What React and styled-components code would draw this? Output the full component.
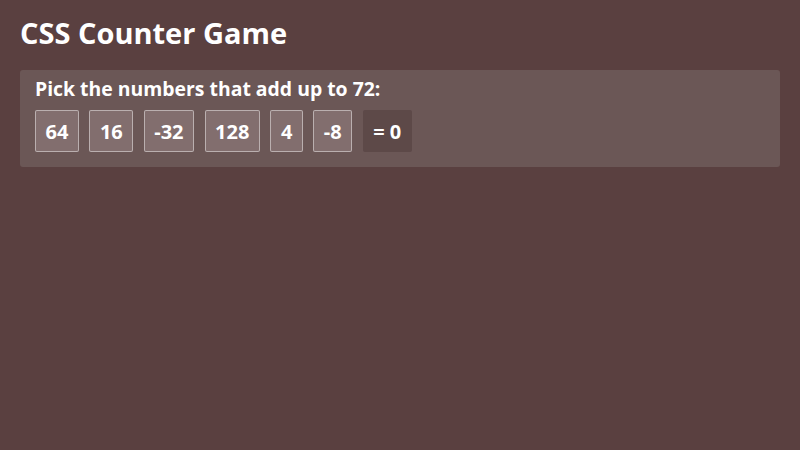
import styled, { createGlobalStyle } from "styled-components";

const GlobalStyle = createGlobalStyle`
  html, body {
    margin: 0;
    background: #5a4040;
    color: #fff;
    font-family: "Open Sans", "Noto Sans", sans-serif;
  }
`;

const Page = styled.div`
  padding: 11px 20px 20px;
`;

const Title = styled.h1`
  margin: 0 0 15px;
  font-size: 29px;
  font-weight: 700;
  line-height: 44px;
`;

const Panel = styled.div`
  background: #6b5756;
  border-radius: 3px;
  padding: 6px 15px 15px;
`;

const Prompt = styled.p`
  margin: 0 0 8px;
  font-size: 19.4px;
  font-weight: 700;
  line-height: 26px;
`;

const Row = styled.div`
  display: flex;
  gap: 10.5px;
`;

const NumberButton = styled.button`
  height: 42px;
  padding: 0 9.5px;
  border: 1px solid rgba(255, 255, 255, 0.45);
  border-radius: 2px;
  background: ${(p) => (p.$picked ? "#9c8483" : "#826e6e")};
  color: #fff;
  font-family: inherit;
  font-size: 20px;
  font-weight: 700;
  cursor: pointer;
`;

const Total = styled.div`
  display: flex;
  align-items: center;
  height: 42px;
  padding: 0 10.5px;
  background: #5d4948;
  border-radius: 2px;
  font-size: 20px;
  font-weight: 700;
`;

const numbers = [64, 16, -32, 128, 4, -8];

export default function App() {
  return (
    <>
      <GlobalStyle />
      <Page>
        <Title>CSS Counter Game</Title>
        <Panel>
          <Prompt>Pick the numbers that add up to 72:</Prompt>
          <Row>
            {numbers.map((n) => (
              <NumberButton key={n}>{n}</NumberButton>
            ))}
            <Total>= 0</Total>
          </Row>
        </Panel>
      </Page>
    </>
  );
}
